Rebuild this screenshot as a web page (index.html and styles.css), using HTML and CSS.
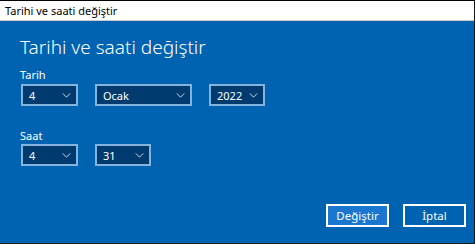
FILE: index.html
```html
<!DOCTYPE html>
<html lang="tr">
<head>
<meta charset="utf-8">
<link rel="stylesheet" href="styles.css">
</head>
<body>
<div class="window">
  <div class="titlebar">Tarihi ve saati değiştir</div>
  <div class="content">
    <h1 class="heading">Tarihi ve saati değiştir</h1>
    <div class="label">Tarih</div>
    <div class="row">
      <div class="select w-day"><span>4</span><svg class="chev" viewBox="0 0 10 6"><path d="M0.5 0.5 L5 5 L9.5 0.5" /></svg></div>
      <div class="select w-month"><span>Ocak</span><svg class="chev" viewBox="0 0 10 6"><path d="M0.5 0.5 L5 5 L9.5 0.5" /></svg></div>
      <div class="select w-year"><span>2022</span><svg class="chev" viewBox="0 0 10 6"><path d="M0.5 0.5 L5 5 L9.5 0.5" /></svg></div>
    </div>
    <div class="label label-time">Saat</div>
    <div class="row row-time">
      <div class="select w-day"><span>4</span><svg class="chev" viewBox="0 0 10 6"><path d="M0.5 0.5 L5 5 L9.5 0.5" /></svg></div>
      <div class="select w-min"><span>31</span><svg class="chev" viewBox="0 0 10 6"><path d="M0.5 0.5 L5 5 L9.5 0.5" /></svg></div>
    </div>
    <div class="actions">
      <button class="btn btn-primary">Değiştir</button>
      <button class="btn">İptal</button>
    </div>
  </div>
</div>
</body>
</html>
```
FILE: styles.css
```css
html, body {
  margin: 0;
  padding: 0;
}
body {
  width: 475px;
  height: 244px;
  font-family: "Noto Sans", "Open Sans", sans-serif;
  overflow: hidden;
}
.window {
  width: 475px;
  height: 244px;
  box-sizing: border-box;
  border-top: 1px solid #000;
  border-right: 1px solid #1a1a1a;
  border-bottom: 1px solid #1a1a1a;
  display: flex;
  flex-direction: column;
  background: #0063b1;
}
.titlebar {
  height: 19px;
  background: #fff;
  border-bottom: 1px solid #c8c8c8;
  font-size: 11px;
  line-height: 19px;
  padding-left: 5px;
  color: #000;
}
.content {
  flex: 1;
  padding: 13px 0 0 21px;
  color: #fff;
  display: flex;
  flex-direction: column;
}
.heading {
  margin: 0 0 0 -1px;
  font-size: 19px;
  font-weight: 300;
  line-height: 26px;
}
.label {
  font-size: 11px;
  line-height: 16px;
  margin-top: 7px;
  margin-left: -1px;
}
.label-time {
  margin-top: 22px;
}
.row {
  display: flex;
  gap: 17px;
  margin-top: 1px;
}
.row-time {
  margin-top: 0;
}
.select {
  height: 22px;
  box-sizing: border-box;
  border: 2px solid #84b4de;
  background: #003b70;
  display: flex;
  align-items: center;
  justify-content: space-between;
  padding: 0 5px 0 6px;
  font-size: 11px;
  color: #fff;
}
.w-day { width: 57px; }
.w-month { width: 97px; }
.w-year { width: 56px; }
.w-min { width: 56px; }
.chev {
  width: 9px;
  height: 5px;
  fill: none;
  stroke: #d8e6f3;
  stroke-width: 1.1;
  flex: none;
}
.actions {
  margin-top: auto;
  margin-bottom: 16px;
  display: flex;
  justify-content: flex-end;
  gap: 14px;
  padding-right: 8px;
}
.btn {
  width: 63px;
  height: 23px;
  box-sizing: border-box;
  border: 2px solid #fff;
  background: transparent;
  color: #fff;
  font-family: inherit;
  font-size: 11.5px;
  padding: 0;
}
.btn-primary {
  background: #1a76d1;
}
```
